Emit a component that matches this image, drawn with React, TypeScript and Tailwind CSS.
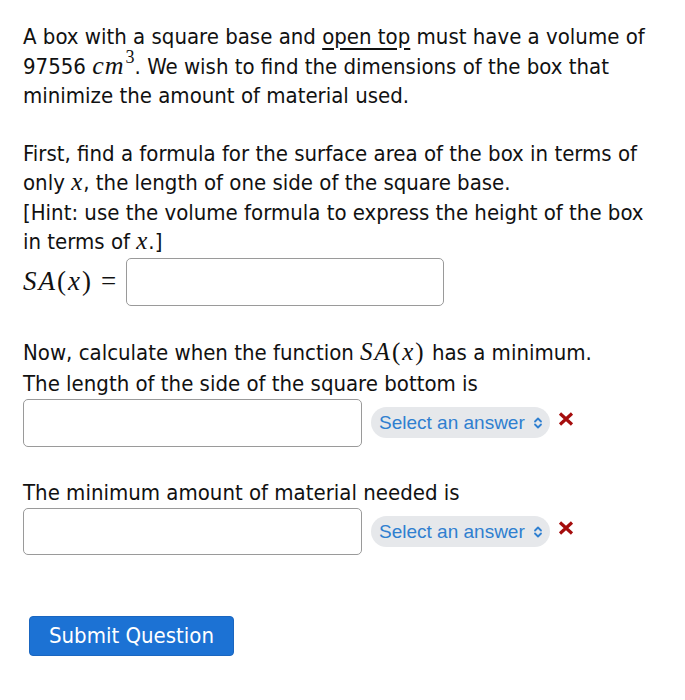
import React from "react";

const M = ({ children }: { children: React.ReactNode }) => (
  <span className="italic font-['Liberation_Serif',serif] text-[25px] leading-none tracking-[1px]">{children}</span>
);

function SAx({ size }: { size: string }) {
  return (
    <span className={`font-['Liberation_Serif',serif] ${size} leading-none tracking-[2px]`}>
      <i>SA</i>(<i>x</i>)
    </span>
  );
}

function SelectPill() {
  return (
    <div className="flex items-center h-[31px] rounded-full bg-[#e6e8eb] pl-[8px] pr-[6px] font-['Liberation_Sans',sans-serif] text-[19px] text-[#2f7fd0]">
      <span>Select an answer</span>
      <svg width="12" height="14" viewBox="0 0 12 14" className="ml-[7px]" fill="none" stroke="#2f7fd0" strokeWidth="1.8" strokeLinecap="round" strokeLinejoin="round">
        <path d="M3 5.5 L6 2.5 L9 5.5" />
        <path d="M3 8.5 L6 11.5 L9 8.5" />
      </svg>
    </div>
  );
}

function RedX() {
  return (
    <svg width="16" height="14" viewBox="0 0 16 14" className="ml-[8px] -mt-[8px]">
      <path d="M2 1.5 L14 12.5 M14 1.5 L2 12.5" stroke="#a50d0d" strokeWidth="3.2" strokeLinecap="butt" />
    </svg>
  );
}

export default function App() {
  return (
    <div className="w-[685px] h-[700px] bg-white text-[#111] font-['DejaVu_Sans_Condensed','DejaVu_Sans',sans-serif] text-[22px] leading-[29.5px] pl-[23px] pr-[20px] pt-[22px]">
      <p>
        A box with a square base and <span className="underline underline-offset-[4px]">open top</span> must have a volume of 97556{" "}
        <span className="font-['Liberation_Serif',serif] italic text-[26px] leading-none tracking-[1px]">cm</span>
        <sup className="font-['Liberation_Serif',serif] text-[18px] leading-none -top-[11px] ml-[1px]">3</sup>. We wish to find the dimensions of the box that minimize the amount of material used.
      </p>
      <p className="mt-[28px]">
        First, find a formula for the surface area of the box in terms of only <M>x</M>, the length of one side of the square base.
        <br />
        [Hint: use the volume formula to express the height of the box in terms of <M>x</M>.]
      </p>
      <div className="flex items-center mt-[1px]">
        <SAx size="text-[27px]" />
        <span className="font-['Liberation_Serif',serif] text-[27px] ml-[8px] mr-[10px]">=</span>
        <div className="w-[318px] h-[48px] border border-[#9a9a9a] rounded-[5px]" />
      </div>
      <p className="mt-[32px]">
        Now, calculate when the function <SAx size="text-[25px]" /> has a minimum.
      </p>
      <p className="mt-[2px]">The length of the side of the square bottom is</p>
      <div className="flex items-center mt-[0px]">
        <div className="w-[339px] h-[48px] border border-[#9a9a9a] rounded-[5px]" />
        <div className="ml-[9px]"><SelectPill /></div>
        <RedX />
      </div>
      <p className="mt-[31px]">The minimum amount of material needed is</p>
      <div className="flex items-center mt-[1px]">
        <div className="w-[339px] h-[47px] border border-[#9a9a9a] rounded-[5px]" />
        <div className="ml-[9px]"><SelectPill /></div>
        <RedX />
      </div>
      <button className="mt-[61px] ml-[6px] w-[205px] h-[40px] rounded-[4px] bg-[#1c72d4] text-white text-[22px] border border-[#1a66c0]">
        Submit Question
      </button>
    </div>
  );
}
